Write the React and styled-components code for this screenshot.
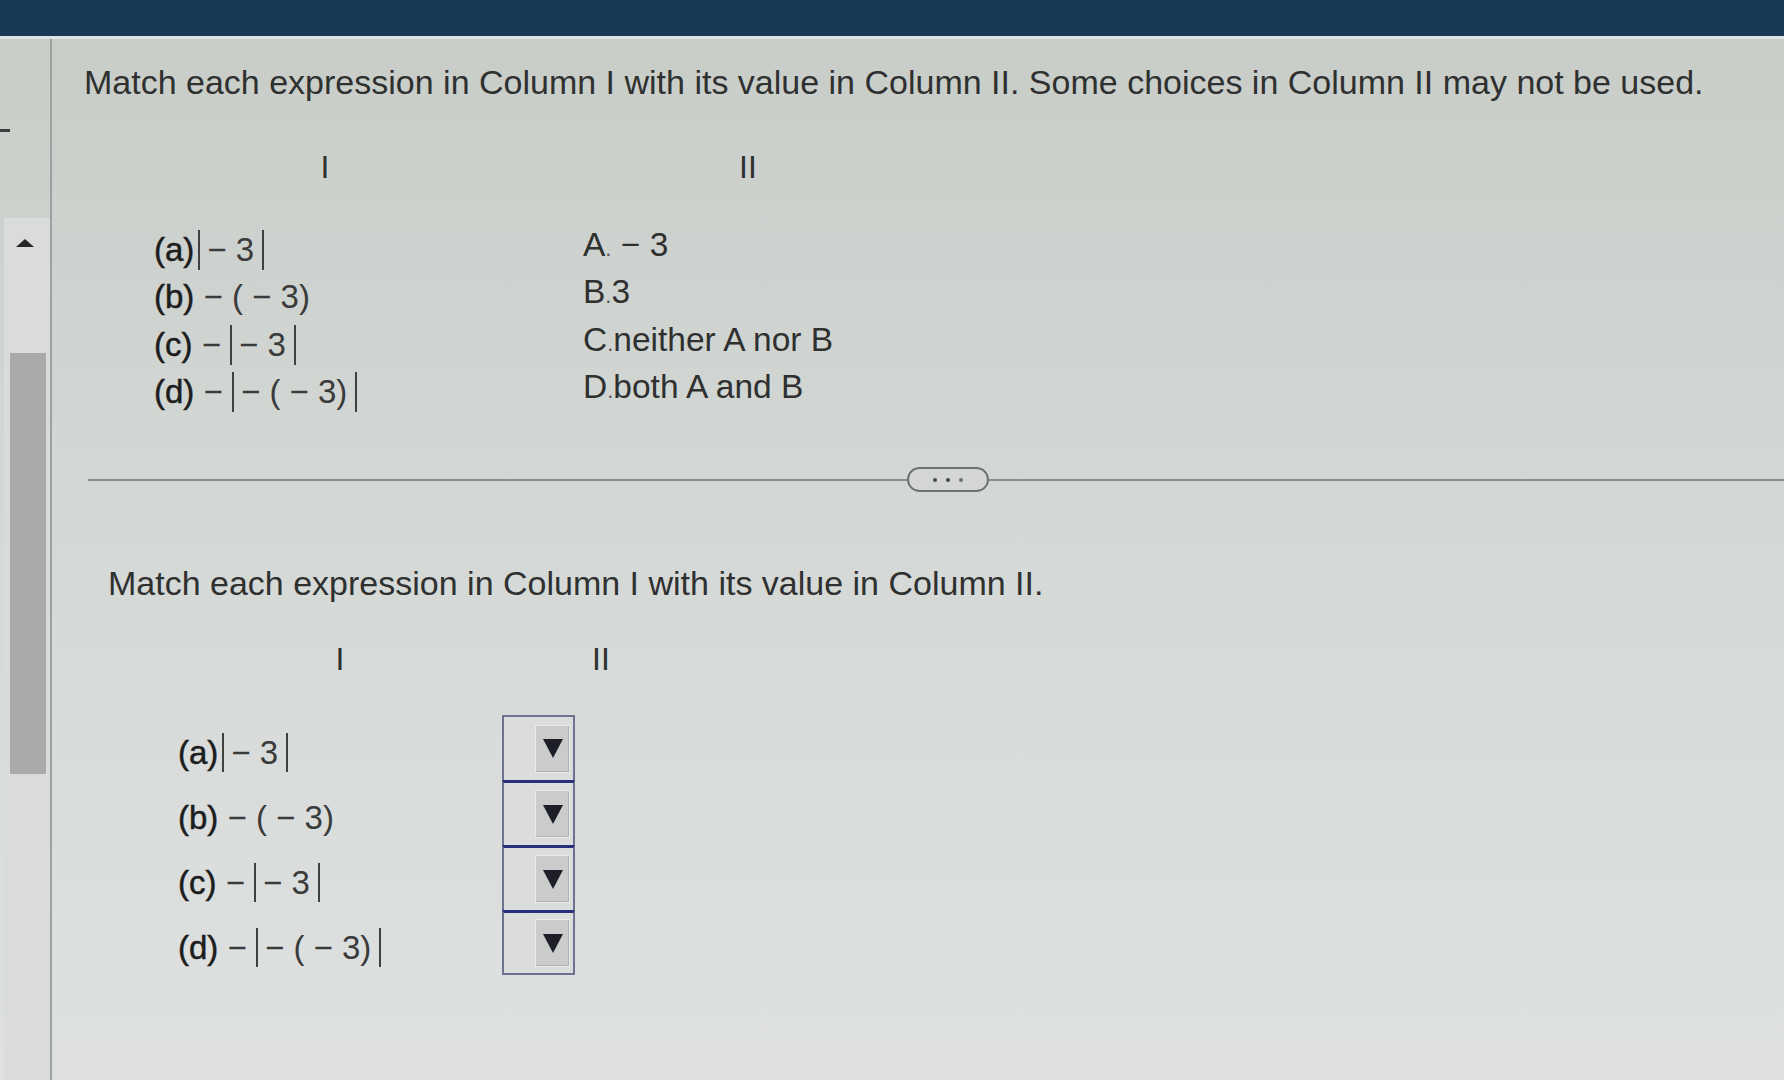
import React from 'react';
import styled, { createGlobalStyle } from 'styled-components';

const GlobalStyle = createGlobalStyle`
  html, body {
    margin: 0;
    padding: 0;
  }
  body {
    font-family: "Liberation Sans", Arial, sans-serif;
    background: #d3d7d4;
    color: #2c2d2d;
  }
`;

const Screen = styled.div`
  height: 1080px;
  overflow: hidden;
  display: flex;
  flex-direction: column;
  background: linear-gradient(180deg, #c8ccc7 0%, #d4d8d5 45%, #dee1e0 100%);
`;

const TopBar = styled.div`
  flex: none;
  height: 36px;
  background: #183a57;
  border-bottom: 3px solid #dfe3e3;
`;

const Body = styled.div`
  flex: 1;
  display: flex;
  min-height: 0;
`;

const Sidebar = styled.aside`
  flex: none;
  width: 50px;
  border-right: 2px solid #9da2a0;
  display: flex;
  flex-direction: column;
`;

const Dash = styled.div`
  width: 10px;
  height: 3px;
  margin-top: 90px;
  background: #3d3f3f;
`;

const ScrollTrack = styled.div`
  flex: 1;
  margin: 86px 0 0 4px;
  background: #d9dcda;
  display: flex;
  flex-direction: column;
`;

const ScrollArrow = styled.div`
  height: 50px;
  display: flex;
  align-items: center;
  justify-content: center;
  padding-right: 4px;

  &::before {
    content: "";
    border-left: 9px solid transparent;
    border-right: 9px solid transparent;
    border-bottom: 8px solid #252626;
  }
`;

const Thumb = styled.div`
  width: 36px;
  height: 421px;
  margin: 85px 0 0 6px;
  background: #a8aaab;
`;

const Main = styled.main`
  flex: 1;
  display: flex;
  flex-direction: column;
`;

const Section = styled.section`
  padding-left: ${(p) => p.$indent}px;
`;

const Prompt = styled.p`
  margin: ${(p) => p.$top}px 0 0;
  font-size: 34px;
  line-height: 40px;
  color: #2f3030;
  white-space: nowrap;
`;

const MatchTable = styled.div`
  display: grid;
  grid-template-columns: ${(p) => p.$cols};
  column-gap: ${(p) => p.$gap}px;
  margin: ${(p) => p.$top}px 0 0 70px;
`;

const ColHead = styled.div`
  font-size: 32px;
  line-height: 40px;
  text-align: center;
  color: #2f3030;
  margin-bottom: ${(p) => p.$below}px;
`;

const List = styled.div`
  display: flex;
  flex-direction: column;
  margin-top: ${(p) => p.$shift || 0}px;
`;

const Item = styled.div`
  height: ${(p) => p.$h}px;
  display: flex;
  align-items: center;
  padding-top: ${(p) => p.$drop || 0}px;
  box-sizing: border-box;
  font-size: 33px;
  white-space: pre;
  color: #3a3b3b;
`;

const Label = styled.span`
  color: #1c1d1d;
  -webkit-text-stroke: 0.5px #1c1d1d;
`;

const Abs = styled.span`
  display: inline-block;
  line-height: 1.2;
  margin-left: ${(p) => (p.$tight ? 4 : 0)}px;
  padding: 0 8px 0 7px;
  border-left: 2px solid #3f4040;
  border-right: 2px solid #3f4040;
`;

const Choice = styled.span`
  font-size: 33.5px;
  color: #2f3030;
`;

const Dot = styled.span`
  font-size: 22px;
  color: #555;
`;

const Divider = styled.div`
  display: flex;
  align-items: center;
  height: 25px;
  margin: 51px 0 0 36px;
`;

const Rule = styled.div`
  flex: ${(p) => (p.$len ? 'none' : 1)};
  width: ${(p) => (p.$len ? `${p.$len}px` : 'auto')};
  height: 2px;
  background: #8a8d8c;
`;

const MorePill = styled.button`
  flex: none;
  width: 82px;
  height: 25px;
  padding: 0;
  box-sizing: border-box;
  border: 2px solid #6f7271;
  border-radius: 13px;
  background: #d3d6d4;
  display: flex;
  align-items: center;
  justify-content: center;
  gap: 9px;
`;

const PillDot = styled.i`
  width: 4px;
  height: 4px;
  border-radius: 50%;
  background: ${(p) => (p.$faint ? '#6d7076' : '#464950')};
`;

const DropStack = styled.div`
  display: flex;
  flex-direction: column;
  width: 73px;
`;

const Dropdown = styled.div`
  height: 65px;
  box-sizing: border-box;
  border-left: 2px solid #6c7290;
  border-right: 2px solid #6c7290;
  border-top: 3px solid #28307c;
  background: #dadddc;
  display: flex;
  align-items: center;
  justify-content: flex-end;
  padding-right: 3px;

  &:first-child {
    border-top: 2px solid #6c7290;
  }
  &:last-child {
    border-bottom: 2px solid #6c7290;
  }
`;

const DropButton = styled.div`
  width: 35px;
  height: 48px;
  box-sizing: border-box;
  background: #c9cccb;
  border: 1px solid #e9ebea;
  box-shadow: inset -1px -1px 0 #b0b3b2;
  display: flex;
  align-items: center;
  justify-content: center;

  &::before {
    content: "";
    border-left: 10px solid transparent;
    border-right: 10px solid transparent;
    border-top: 19px solid #1d1e28;
  }
`;

const expressions = [
  { label: '(a)', body: <Abs $tight>− 3</Abs> },
  { label: '(b)', body: <> − ( − 3)</> },
  { label: '(c)', body: <> − <Abs>− 3</Abs></> },
  { label: '(d)', body: <> − <Abs>− ( − 3)</Abs></> },
];

const choices = [
  { key: 'A', text: ' − 3' },
  { key: 'B', text: '3' },
  { key: 'C', text: 'neither A nor B' },
  { key: 'D', text: 'both A and B' },
];

function ExpressionList({ rowHeight, drop }) {
  return (
    <List>
      {expressions.map((e) => (
        <Item key={e.label} $h={rowHeight} $drop={drop}>
          <Label>{e.label}</Label>
          {e.body}
        </Item>
      ))}
    </List>
  );
}

export default function App() {
  return (
    <>
      <GlobalStyle />
      <Screen>
        <TopBar />
        <Body>
          <Sidebar>
            <Dash />
            <ScrollTrack>
              <ScrollArrow />
              <Thumb />
            </ScrollTrack>
          </Sidebar>
          <Main>
            <Section $indent={32}>
              <Prompt $top={23}>
                Match each expression in Column I with its value in Column II. Some choices in Column II may not be used.
              </Prompt>
              <MatchTable $cols="342px 330px" $gap={87} $top={45}>
                <ColHead $below={39}>I</ColHead>
                <ColHead $below={39}>II</ColHead>
                <ExpressionList rowHeight={47.5} />
                <List $shift={-5}>
                  {choices.map((c) => (
                    <Item key={c.key} $h={47.5}>
                      <Choice>
                        {c.key}
                        <Dot>.</Dot>
                        {c.text}
                      </Choice>
                    </Item>
                  ))}
                </List>
              </MatchTable>
            </Section>

            <Divider>
              <Rule $len={819} />
              <MorePill aria-label="more">
                <PillDot />
                <PillDot />
                <PillDot $faint />
              </MorePill>
              <Rule />
            </Divider>

            <Section $indent={56}>
              <Prompt $top={71}>Match each expression in Column I with its value in Column II.</Prompt>
              <MatchTable $cols="324px 198px" $gap={0} $top={36}>
                <ColHead $below={36}>I</ColHead>
                <ColHead $below={36}>II</ColHead>
                <ExpressionList rowHeight={65} drop={10} />
                <DropStack>
                  {expressions.map((e) => (
                    <Dropdown key={e.label}>
                      <DropButton />
                    </Dropdown>
                  ))}
                </DropStack>
              </MatchTable>
            </Section>
          </Main>
        </Body>
      </Screen>
    </>
  );
}
